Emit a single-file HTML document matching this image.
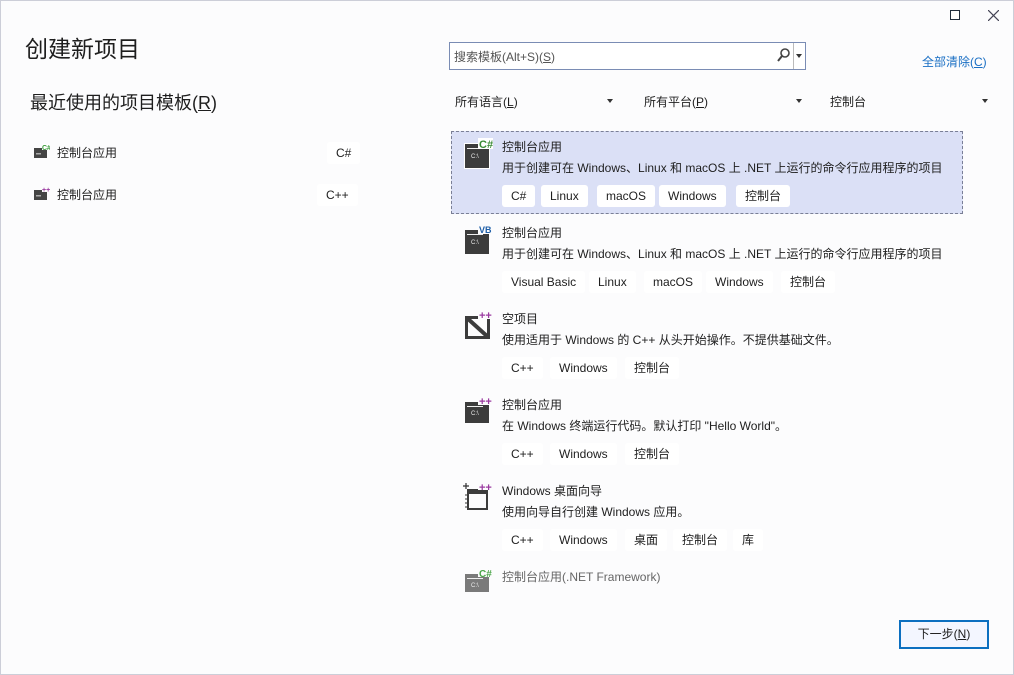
<!DOCTYPE html>
<html><head><meta charset="utf-8"><style>
*{margin:0;padding:0;box-sizing:border-box}
body{width:1014px;height:675px;background:#fcfcfd;font-family:"Liberation Sans","Microsoft YaHei","Noto Sans CJK SC",sans-serif;color:#1e1e1e;position:relative;overflow:hidden;font-size:12px}
.win{position:absolute;left:0;top:0;width:1014px;height:675px;border:1px solid #ccced8}
.a{position:absolute;white-space:nowrap}
.tag{position:absolute;height:22px;line-height:22px;background:#fff;border-radius:3px;padding:0 9px;font-size:12px}
.t{font-size:12px}
.d{font-size:12px;color:#1e1e1e}
.dd{position:absolute;font-size:12px}
.dd:after{content:"";position:absolute;right:0;top:6px;border:3px solid transparent;border-top:4px solid #333}
</style></head><body>
<div class="win"></div>
<div class="a" style="left:950px;top:10px;width:10px;height:10px;border:1.5px solid #1e2a3a"></div>
<svg class="a" style="left:988px;top:10px" width="11" height="11"><path d="M0 0L11 11M11 0L0 11" stroke="#445" stroke-width="1.2"/></svg>
<div class="a" style="left:25px;top:30px;font-size:23px">创建新项目</div>
<div class="a" style="left:30px;top:89px;font-size:18px">最近使用的项目模板(<u>R</u>)</div>

<svg class="a" style="left:34px;top:144px" width="16" height="16"><rect x="0" y="4" width="13" height="10" fill="#444"/><rect x="2" y="9" width="5" height="1.5" fill="#aaa"/><rect x="8" y="0" width="8" height="6" fill="#fff"/><text x="8" y="6" font-size="7" font-weight="bold" fill="#3a9b3a">C#</text></svg>
<div class="a" style="left:57px;top:144px;font-size:12px">控制台应用</div>
<div class="tag" style="left:327px;top:142px">C#</div>
<svg class="a" style="left:34px;top:186px" width="16" height="16"><rect x="0" y="4" width="13" height="10" fill="#444"/><rect x="2" y="9" width="5" height="1.5" fill="#aaa"/><rect x="8" y="0" width="8" height="6" fill="#fcfcfd"/><text x="8" y="6" font-size="7" fill="#9a3aa0" font-weight="bold">++</text></svg>
<div class="a" style="left:57px;top:186px;font-size:12px">控制台应用</div>
<div class="tag" style="left:317px;top:184px">C++</div>

<div class="a" style="left:449px;top:42px;width:357px;height:28px;border:1px solid #7a8cb4;background:#fff"></div>
<div class="a" style="left:454px;top:48px;font-size:12px;color:#555">搜索模板(Alt+S)(<u>S</u>)</div>
<svg class="a" style="left:777px;top:47px" width="14" height="16"><circle cx="8" cy="6" r="4" fill="none" stroke="#444" stroke-width="1.6"/><path d="M5 9L1 14" stroke="#444" stroke-width="2"/></svg>
<div class="a" style="left:793px;top:43px;width:1px;height:26px;background:#bbb"></div>
<div class="a" style="left:796px;top:54px;border:3px solid transparent;border-top:4px solid #333"></div>
<div class="a" style="left:922px;top:53px;font-size:12px;color:#1a6fc4">全部清除(<u>C</u>)</div>

<div class="dd" style="left:455px;top:93px;width:158px">所有语言(<u>L</u>)</div>
<div class="dd" style="left:644px;top:93px;width:158px">所有平台(<u>P</u>)</div>
<div class="dd" style="left:830px;top:93px;width:158px">控制台</div>

<div class="a" style="left:451px;top:131px;width:512px;height:83px;background:#dbe0f6;border:1px dashed #7a7f96"></div>

<!-- item1 -->
<svg class="a" style="left:462px;top:138px" width="32" height="32"><rect x="2" y="5" width="26" height="26" fill="#fff"/><rect x="3" y="6" width="24" height="24" fill="#3c3c3c"/><rect x="5" y="10" width="16" height="1" fill="#eee"/><text x="9" y="20" font-size="6" fill="#eee">C:\</text><rect x="16" y="0" width="15" height="11" fill="#fff"/><text x="17" y="10" font-size="11" font-weight="bold" fill="#388a34">C#</text></svg>
<div class="a t" style="left:502px;top:138px">控制台应用</div>
<div class="a d" style="left:502px;top:159px">用于创建可在 Windows、Linux 和 macOS 上 .NET 上运行的命令行应用程序的项目</div>
<div class="tag" style="left:502px;top:185px">C#</div><div class="tag" style="left:541px;top:185px">Linux</div><div class="tag" style="left:597px;top:185px">macOS</div><div class="tag" style="left:659px;top:185px">Windows</div><div class="tag" style="left:736px;top:185px">控制台</div>

<!-- item2 -->
<svg class="a" style="left:462px;top:224px" width="32" height="32"><rect x="3" y="6" width="24" height="24" fill="#3c3c3c"/><rect x="5" y="10" width="16" height="1" fill="#eee"/><text x="9" y="20" font-size="6" fill="#eee">C:\</text><rect x="16" y="0" width="15" height="10" fill="#fcfcfd"/><text x="17" y="9" font-size="9" font-weight="bold" fill="#1f5fa8">VB</text></svg>
<div class="a t" style="left:502px;top:224px">控制台应用</div>
<div class="a d" style="left:502px;top:245px">用于创建可在 Windows、Linux 和 macOS 上 .NET 上运行的命令行应用程序的项目</div>
<div class="tag" style="left:502px;top:271px">Visual Basic</div><div class="tag" style="left:589px;top:271px">Linux</div><div class="tag" style="left:644px;top:271px">macOS</div><div class="tag" style="left:706px;top:271px">Windows</div><div class="tag" style="left:781px;top:271px">控制台</div>

<!-- item3 -->
<svg class="a" style="left:462px;top:310px" width="32" height="30"><path d="M4.5 7.5h22v20h-22z" fill="none" stroke="#3c3c3c" stroke-width="3"/><path d="M5 8L26 27" stroke="#3c3c3c" stroke-width="4"/><rect x="16" y="0" width="15" height="9" fill="#fcfcfd"/><text x="17" y="9" font-size="11" font-weight="bold" fill="#9a3aa0">++</text></svg>
<div class="a t" style="left:502px;top:310px">空项目</div>
<div class="a d" style="left:502px;top:331px">使用适用于 Windows 的 C++ 从头开始操作。不提供基础文件。</div>
<div class="tag" style="left:502px;top:357px">C++</div><div class="tag" style="left:550px;top:357px">Windows</div><div class="tag" style="left:625px;top:357px">控制台</div>

<!-- item4 -->
<svg class="a" style="left:462px;top:396px" width="32" height="30"><rect x="3" y="6" width="24" height="21" fill="#3c3c3c"/><rect x="5" y="10" width="16" height="1" fill="#eee"/><text x="9" y="19" font-size="6" fill="#eee">C:\</text><rect x="16" y="0" width="15" height="9" fill="#fcfcfd"/><text x="17" y="9" font-size="11" font-weight="bold" fill="#9a3aa0">++</text></svg>
<div class="a t" style="left:502px;top:396px">控制台应用</div>
<div class="a d" style="left:502px;top:417px">在 Windows 终端运行代码。默认打印 "Hello World"。</div>
<div class="tag" style="left:502px;top:443px">C++</div><div class="tag" style="left:550px;top:443px">Windows</div><div class="tag" style="left:625px;top:443px">控制台</div>

<!-- item5 -->
<svg class="a" style="left:462px;top:482px" width="32" height="30"><path d="M6 8h19v19H6z" fill="none" stroke="#3c3c3c" stroke-width="2"/><rect x="6" y="8" width="19" height="4" fill="#3c3c3c"/><path d="M4 1v6M1 4h6" stroke="#333" stroke-width="1.2"/><path d="M3 13h2M3 17h2M3 21h2M3 25h2" stroke="#333"/><rect x="16" y="0" width="15" height="8" fill="#fcfcfd"/><text x="17" y="9" font-size="11" font-weight="bold" fill="#9a3aa0">++</text></svg>
<div class="a t" style="left:502px;top:482px">Windows 桌面向导</div>
<div class="a d" style="left:502px;top:503px">使用向导自行创建 Windows 应用。</div>
<div class="tag" style="left:502px;top:529px">C++</div><div class="tag" style="left:550px;top:529px">Windows</div><div class="tag" style="left:625px;top:529px">桌面</div><div class="tag" style="left:673px;top:529px">控制台</div><div class="tag" style="left:733px;top:529px">库</div>

<!-- item6 -->
<svg class="a" style="left:462px;top:568px" width="32" height="24"><rect x="3" y="6" width="24" height="18" fill="#7a7a7a"/><rect x="5" y="10" width="16" height="1" fill="#eee"/><text x="9" y="19" font-size="6" fill="#eee">C:\</text><rect x="16" y="0" width="15" height="9" fill="#fcfcfd"/><text x="17" y="9" font-size="10" font-weight="bold" fill="#4aa548">C#</text></svg>
<div class="a t" style="left:502px;top:568px;color:#666">控制台应用(.NET Framework)</div>

<div class="a" style="left:899px;top:620px;width:90px;height:29px;border:2px solid #0b6fc0;background:#f3f6ff;text-align:center;line-height:25px;font-size:12px">下一步(<u>N</u>)</div>
</body></html>
